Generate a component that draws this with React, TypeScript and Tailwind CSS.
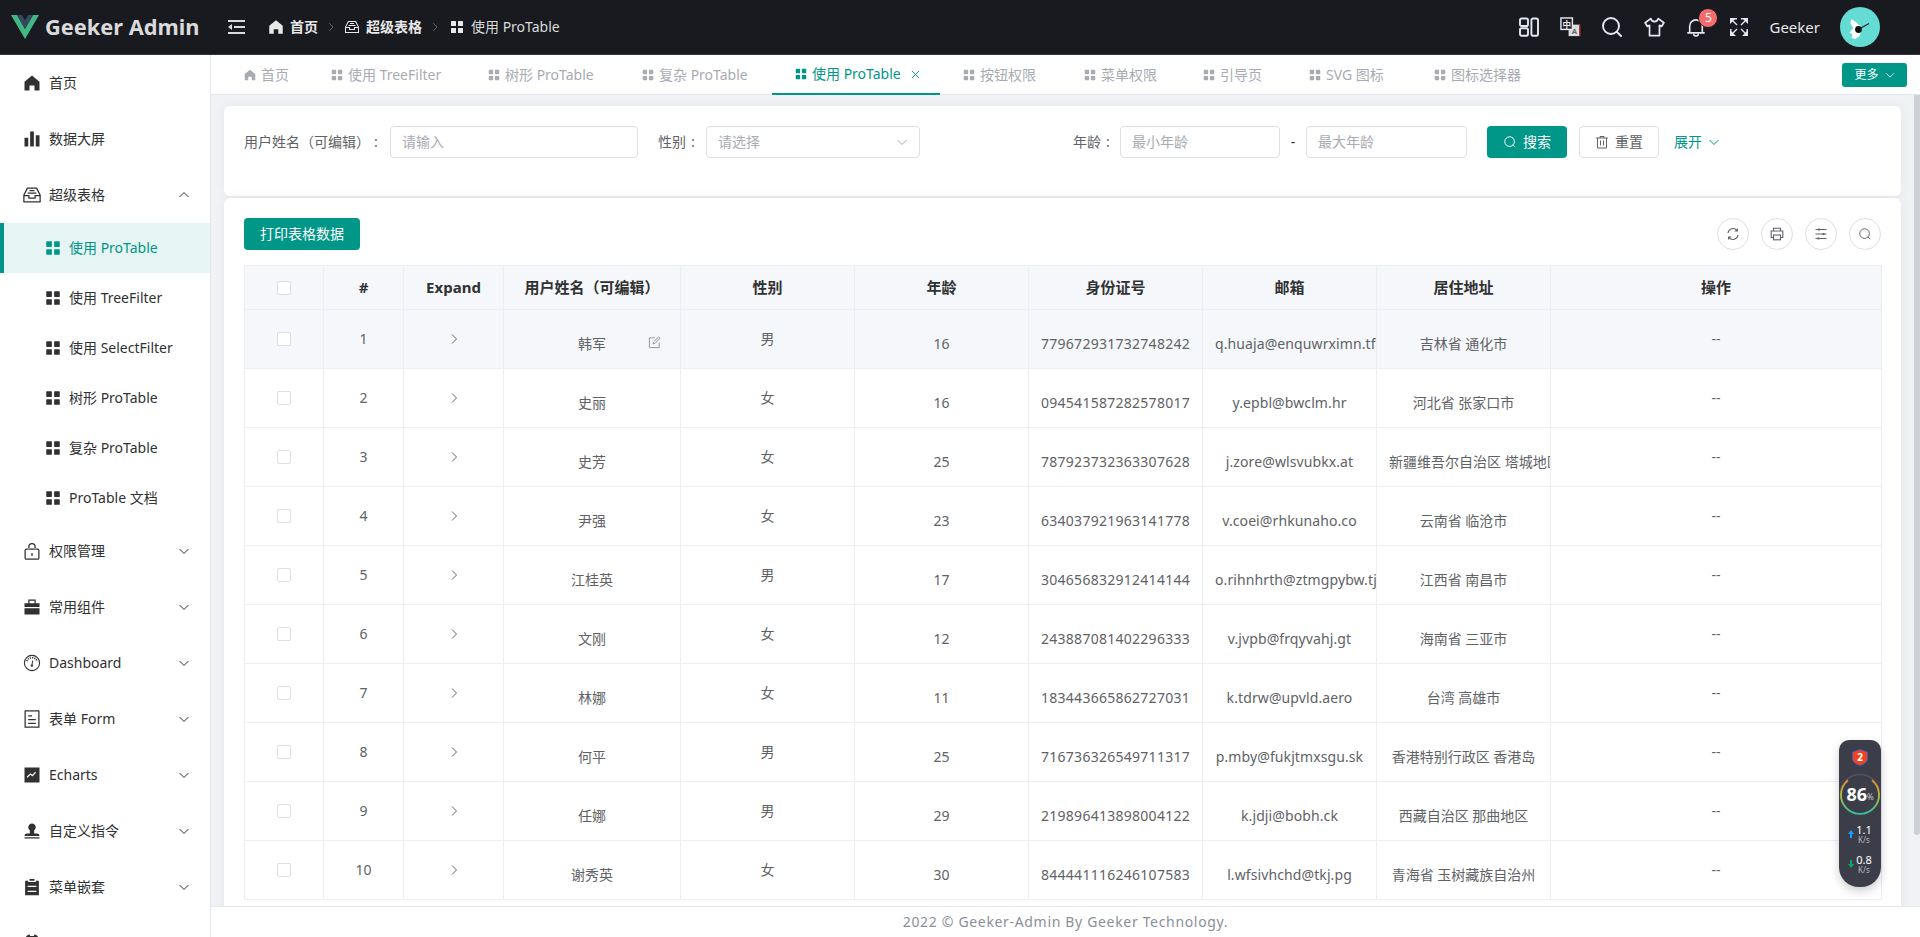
import type { ReactNode } from 'react';

const P = ({ d, className = '' }: { d: string; className?: string }) => (
  <svg viewBox="0 0 1024 1024" fill="currentColor" className={className}>
    <path d={d} fillRule="evenodd" />
  </svg>
);

const HOME = 'M512 128 128 447.936V896h255.936V640H640v256h255.936V447.936z';
const MENU =
  'M160 448a32 32 0 0 1-32-32V160a32 32 0 0 1 32-32h256a32 32 0 0 1 32 32v256a32 32 0 0 1-32 32H160zm448 0a32 32 0 0 1-32-32V160a32 32 0 0 1 32-32h256a32 32 0 0 1 32 32v256a32 32 0 0 1-32 32H608zM160 896a32 32 0 0 1-32-32V608a32 32 0 0 1 32-32h256a32 32 0 0 1 32 32v256a32 32 0 0 1-32 32H160zm448 0a32 32 0 0 1-32-32V608a32 32 0 0 1 32-32h256a32 32 0 0 1 32 32v256a32 32 0 0 1-32 32H608z';
const BOX =
  'M288 384h448v64H288v-64zm96-128h256v64H384v-64zM131.456 512H384v128h256V512h252.544L721.856 192H302.144L131.456 512zM896 576H704v128H320V576H128v256h768V576zM275.776 128h472.448a32 32 0 0 1 28.608 17.664l179.84 359.552A32 32 0 0 1 960 519.552V864a32 32 0 0 1-32 32H96a32 32 0 0 1-32-32V519.552a32 32 0 0 1 3.392-14.336l179.776-359.552A32 32 0 0 1 275.776 128z';
const BARS = 'M416 896V128h192v768H416zm-288 0V448h192v448H128zm576 0V320h192v576H704z';
const LOCK =
  'M224 448a32 32 0 0 0-32 32v384a32 32 0 0 0 32 32h576a32 32 0 0 0 32-32V480a32 32 0 0 0-32-32H224zm0-64h576a96 96 0 0 1 96 96v384a96 96 0 0 1-96 96H224a96 96 0 0 1-96-96V480a96 96 0 0 1 96-96zM480 608h64v160h-64zM512 96a192 192 0 0 1 192 192v128h-64V288a128 128 0 0 0-256 0v128h-64V288A192 192 0 0 1 512 96z';
const CASE = 'M320 320V128h384v192h192v192H128V320h192zM128 576h768v320H128V576zM384 320h256V192H384v128z';
const STAMP =
  'M624 475.968V640h144a128 128 0 0 1 128 128H128a128 128 0 0 1 128-128h144V475.968a192 192 0 1 1 224 0zM128 896v-64h768v64H128z';
const LIST =
  'M704 192h160v736H160V192h160v64h384v-64zM288 512h448v-64H288v64zm0 256h448v-64H288v64zm96-576V96h256v96H384z';
const TICKETS =
  'M192 128v768h640V128H192zm-32-64h704a32 32 0 0 1 32 32v832a32 32 0 0 1-32 32H160a32 32 0 0 1-32-32V96a32 32 0 0 1 32-32zm160 448h384v64H320v-64zm0-192h192v64H320v-64zm0 384h384v64H320v-64z';
const TREND =
  'M128 128h768v768H128V128zm156 524 150-150 104 84 180-190-46-46-140 148-102-82-190 190 44 46z';
const TOOLS =
  'M764.416 254.72a351.68 351.68 0 0 1 86.336 149.184H960v192.064H850.752a351.68 351.68 0 0 1-86.336 149.312l54.72 94.72-166.272 96-54.592-94.72a352.64 352.64 0 0 1-172.48 0L371.136 936l-166.272-96 54.72-94.72a351.68 351.68 0 0 1-86.336-149.312H64v-192h109.248a351.68 351.68 0 0 1 86.336-149.312L204.8 160l166.208-96h.192l54.656 94.592a352.64 352.64 0 0 1 172.48 0L652.8 64h.128L819.2 160l-54.72 94.72z';

const Odometer = ({ className = '' }: { className?: string }) => (
  <svg viewBox="0 0 20 20" fill="none" stroke="currentColor" className={className}>
    <circle cx="10" cy="10" r="7.6" strokeWidth="1.1" />
    <path d="M4.8 8.2A5.6 5.6 0 0 1 15.2 8.2" strokeWidth="1.6" strokeDasharray="1.2 1" />
    <path d="M10.6 7.6 10 12" strokeWidth="1" />
    <circle cx="9.9" cy="12.6" r="1.2" fill="currentColor" strokeWidth="0" />
  </svg>
);

const Chevron = ({ className = '', dir = 'down' }: { className?: string; dir?: 'down' | 'up' | 'right' }) => (
  <svg viewBox="0 0 12 12" fill="none" stroke="currentColor" strokeWidth="1" className={className}>
    {dir === 'down' && <path d="M1.5 4 6 8.5 10.5 4" />}
    {dir === 'up' && <path d="M1.5 8 6 3.5 10.5 8" />}
    {dir === 'right' && <path d="M4 1.5 8.5 6 4 10.5" />}
  </svg>
);

const SearchGlyph = ({ className = '' }: { className?: string }) => (
  <svg viewBox="0 0 16 16" fill="none" stroke="currentColor" strokeWidth="1.1" className={className}>
    <circle cx="7.5" cy="7.5" r="5.5" />
    <path d="m11.6 11.6 2 2" strokeLinecap="round" />
  </svg>
);

const subMenu = ['使用 ProTable', '使用 TreeFilter', '使用 SelectFilter', '树形 ProTable', '复杂 ProTable', 'ProTable 文档'];

const bottomMenu: { label: string; icon: ReactNode }[] = [
  { label: '权限管理', icon: <P d={LOCK} className="w-5 h-5" /> },
  { label: '常用组件', icon: <P d={CASE} className="w-5 h-5" /> },
  { label: 'Dashboard', icon: <Odometer className="w-5 h-5" /> },
  { label: '表单 Form', icon: <P d={TICKETS} className="w-5 h-5" /> },
  { label: 'Echarts', icon: <P d={TREND} className="w-5 h-5" /> },
  { label: '自定义指令', icon: <P d={STAMP} className="w-5 h-5" /> },
  { label: '菜单嵌套', icon: <P d={LIST} className="w-5 h-5" /> },
];

const tabs = [
  { label: '首页', icon: HOME, w: 'w-[87px]' },
  { label: '使用 TreeFilter', w: 'w-[157px]' },
  { label: '树形 ProTable', w: 'w-[154px]' },
  { label: '复杂 ProTable', w: 'w-[153px]' },
  { label: '使用 ProTable', active: true, w: 'w-[168px]' },
  { label: '按钮权限', w: 'w-[121px]' },
  { label: '菜单权限', w: 'w-[119px]' },
  { label: '引导页', w: 'w-[106px]' },
  { label: 'SVG 图标', w: 'w-[125px]' },
  { label: '图标选择器', w: 'w-[110px]' },
];

const rows = [
  ['1', '韩军', '男', '16', '779672931732748242', 'q.huaja@enquwrximn.tf', '吉林省 通化市'],
  ['2', '史丽', '女', '16', '094541587282578017', 'y.epbl@bwclm.hr', '河北省 张家口市'],
  ['3', '史芳', '女', '25', '787923732363307628', 'j.zore@wlsvubkx.at', '新疆维吾尔自治区 塔城地区'],
  ['4', '尹强', '女', '23', '634037921963141778', 'v.coei@rhkunaho.co', '云南省 临沧市'],
  ['5', '江桂英', '男', '17', '304656832912414144', 'o.rihnhrth@ztmgpybw.tj', '江西省 南昌市'],
  ['6', '文刚', '女', '12', '243887081402296333', 'v.jvpb@frqyvahj.gt', '海南省 三亚市'],
  ['7', '林娜', '女', '11', '183443665862727031', 'k.tdrw@upvld.aero', '台湾 高雄市'],
  ['8', '何平', '男', '25', '716736326549711317', 'p.mby@fukjtmxsgu.sk', '香港特别行政区 香港岛'],
  ['9', '任娜', '男', '29', '219896413898004122', 'k.jdji@bobh.ck', '西藏自治区 那曲地区'],
  ['10', '谢秀英', '女', '30', '844441116246107583', 'l.wfsivhchd@tkj.pg', '青海省 玉树藏族自治州'],
];

const Checkbox = () => <span className="block w-[14px] h-[14px] mx-auto rounded-[2px] border border-[#dcdfe6] bg-white" />;

function Header() {
  return (
    <header className="h-[55px] shrink-0 flex items-center bg-[#191a20] border-b border-[#33343a] text-[#e5eaf3]">
      <div className="w-[228px] shrink-0 flex items-center pl-[11px]">
        <svg viewBox="0 0 28 24" className="w-[28px] h-[24px]">
          <path d="M0 0h6l8 14 8-14h6L14 24z" fill="#41b883" />
          <path d="M6 0h5l3 5.5L17 0h5l-8 14z" fill="#35495e" />
        </svg>
        <span className="ml-[6px] text-[21.8px] leading-none font-bold text-[#dadada] whitespace-nowrap">Geeker Admin</span>
      </div>
      <svg viewBox="0 0 17 14" fill="currentColor" className="w-[17px] h-[14px] text-[#dadada]">
        <path d="M0 0h17v2H0zM6 6h11v2H6zM0 12h17v2H0zM4 4v6L0 7z" />
      </svg>
      <nav className="ml-[24px] flex items-center text-sm text-[#dadada] whitespace-nowrap">
        <P d={HOME} className="w-[18px] h-[18px] -mx-[2px] text-[#e8e8e8]" />
        <span className="ml-[7px] font-bold text-[#e8e8e8]">首页</span>
        <Chevron dir="right" className="ml-[8px] mr-[8px] w-[10px] h-[10px] text-[#777]" />
        <P d={BOX} className="w-[16px] h-[16px] text-[#e8e8e8]" />
        <span className="ml-[6px] font-bold text-[#e8e8e8]">超级表格</span>
        <Chevron dir="right" className="ml-[8px] mr-[10px] w-[10px] h-[10px] text-[#777]" />
        <P d={MENU} className="w-[16px] h-[16px] -ml-[1px] text-[#e8e8e8]" />
        <span className="ml-[6px]">使用 ProTable</span>
      </nav>
      <div className="ml-auto flex items-center text-[#e4e8ee]">
        <svg viewBox="0 0 20 20" fill="none" stroke="currentColor" strokeWidth="1.9" className="w-5 h-5">
          <rect x="1" y="1.5" width="8" height="7.5" rx="1.6" />
          <rect x="1" y="11.2" width="8" height="7.5" rx="1.6" />
          <rect x="12.4" y="1.5" width="6.6" height="17.2" rx="1.6" />
        </svg>
        <svg viewBox="0 0 22 22" className="ml-[21px] w-[21px] h-[21px]">
          <rect x="9" y="8" width="12" height="12" fill="#d8dce4" />
          <rect x="20" y="8" width="1.4" height="12" fill="#b3261e" />
          <text x="15" y="18" fontSize="8" textAnchor="middle" fill="#666" fontWeight="700">A</text>
          <rect x="1" y="1" width="12" height="12" fill="#191a20" stroke="#e4e8ee" strokeWidth="1.5" />
          <text x="7" y="11" fontSize="9" textAnchor="middle" fill="#e4e8ee" fontWeight="700">中</text>
        </svg>
        <svg viewBox="0 0 20 20" fill="none" stroke="currentColor" strokeWidth="1.9" className="ml-[21px] w-5 h-5">
          <circle cx="9" cy="9" r="8" />
          <path d="m15 15 4 4" strokeLinecap="round" />
        </svg>
        <svg viewBox="0 0 22 20" fill="none" stroke="currentColor" strokeWidth="1.8" strokeLinejoin="round" className="ml-[22px] w-[21px] h-5">
          <path d="M7 1.2 1.2 5.6 3.6 9.4 5.8 8.2V19h10.4V8.2l2.2 1.2 2.4-3.8L15 1.2c-.6 2.2-2.2 3.2-4 3.2S7.6 3.4 7 1.2z" />
        </svg>
        <div className="relative ml-[22px] w-[18px] h-[21px]">
          <svg viewBox="0 0 20 21" fill="none" stroke="currentColor" strokeWidth="1.8" className="w-[18px] h-[21px]">
            <path d="M1 16.5h18M3 16.5V9a7 7 0 0 1 14 0v7.5M7.5 18.5a3 3 0 0 0 5 0" strokeLinecap="round" />
          </svg>
          <span className="absolute -top-[9px] left-[11px] w-[20px] h-[20px] rounded-full bg-[#f56c6c] border border-[#191a20] text-white text-xs flex items-center justify-center">5</span>
        </div>
        <svg viewBox="0 0 18 18" className="ml-[25px] w-[18px] h-[18px]">
          <path d="M0 0h6L0 6zM18 0v6l-6-6zM0 18v-6l6 6zM18 18h-6l6-6z" fill="currentColor" />
          <path d="m2 2 5 5M16 2l-5 5M2 16l5-5M16 16l-5-5M7 .8H1M17 .8h-6M.8 11v6M17.2 11v6" stroke="currentColor" strokeWidth="1.4" fill="none" />
        </svg>
        <span className="ml-[21px] text-[15px] text-[#e8e8e8]">Geeker</span>
        <svg viewBox="0 0 40 40" className="ml-[20px] mr-[40px] w-10 h-10">
          <circle cx="20" cy="20" r="20" fill="#64dcd4" />
          <path d="M11 12l5 3 3 3 2 1 .5 4-2 6-4 3-4-1 1-4-3-1 2-3 2-2-3-4z" fill="#fff" />
          <circle cx="18.5" cy="22.5" r="3.4" fill="#111" />
          <path d="M20 21.5l9-5" stroke="#222" strokeWidth="1.3" />
        </svg>
      </div>
    </header>
  );
}

function Sidebar() {
  return (
    <aside className="w-[211px] shrink-0 overflow-hidden bg-white border-r border-[#e4e7ed] text-sm text-[#303133]">
      <div className="h-[56px] flex items-center pl-[22px]">
        <P d={HOME} className="w-5 h-5" />
        <span className="ml-[7px]">首页</span>
      </div>
      <div className="h-[56px] flex items-center pl-[22px]">
        <P d={BARS} className="w-5 h-5" />
        <span className="ml-[7px]">数据大屏</span>
      </div>
      <div className="h-[56px] flex items-center pl-[22px]">
        <P d={BOX} className="w-5 h-5" />
        <span className="ml-[7px]">超级表格</span>
        <Chevron dir="up" className="ml-auto mr-[20px] w-3 h-3" />
      </div>
      {subMenu.map((item, i) => (
        <div
          key={item}
          className={
            i === 0
              ? 'h-[50px] flex items-center pl-[40px] bg-[#e6f4f3] text-[#009688] border-l-4 border-[#009688]'
              : 'h-[50px] flex items-center pl-[44px]'
          }
        >
          <P d={MENU} className="w-[18px] h-[18px]" />
          <span className="ml-[7px]">{item}</span>
        </div>
      ))}
      {bottomMenu.map((item) => (
        <div key={item.label} className="h-[56px] flex items-center pl-[22px]">
          {item.icon}
          <span className="ml-[7px]">{item.label}</span>
          <Chevron className="ml-auto mr-[20px] w-3 h-3" />
        </div>
      ))}
      {/* next menu item, only the top of its icon is on screen */}
      <div className="h-[56px] flex items-center pl-[22px]">
        <P d={TOOLS} className="w-5 h-5" />
      </div>
    </aside>
  );
}

function TabBar() {
  return (
    <div className="h-[40px] shrink-0 flex bg-white border-b border-[#e4e7ed] text-sm text-[#a8abb2] whitespace-nowrap">
      <div className="flex flex-1 pl-[10px]">
        {tabs.map((t) => (
          <div
            key={t.label}
            className={
              t.active
                ? `${t.w} h-[40px] flex items-center pl-[22px] border-b-2 border-[#009688] text-[#009688]`
                : `${t.w} h-[39px] flex items-center pl-[22px]`
            }
          >
            <P d={t.icon ?? MENU} className="w-[14px] h-[14px]" />
            <span className="ml-[4px]">{t.label}</span>
            {t.active && (
              <svg viewBox="0 0 10 10" fill="none" stroke="currentColor" strokeWidth="1" className="ml-[10px] w-[9px] h-[9px]">
                <path d="M1 1l8 8M9 1l-8 8" />
              </svg>
            )}
          </div>
        ))}
      </div>
      <div className="w-[78px] pt-[8px]">
        <div className="w-[65px] h-[24px] flex items-center justify-center gap-[6px] rounded-[3px] bg-[#009688] text-white text-xs">
          更多
          <Chevron className="w-[10px] h-[10px]" />
        </div>
      </div>
    </div>
  );
}

const inputBox = 'h-[32px] flex items-center rounded-[4px] border border-[#dcdfe6] bg-white text-[#a8abb2] px-[11px]';

function SearchCard() {
  return (
    <section className="h-[90px] rounded-[6px] bg-white shadow-[0_0_12px_rgba(0,0,0,0.05)] pl-[20px] pt-[20px] flex items-start text-sm text-[#606266] whitespace-nowrap">
      <label className="w-[146px] h-[32px] flex items-center">
        用户姓名（可编辑）<span className="ml-[4px]">:</span>
      </label>
      <div className={`${inputBox} w-[248px]`}>请输入</div>
      <label className="ml-[20px] w-[48px] h-[32px] flex items-center">
        性别<span className="ml-[5px]">:</span>
      </label>
      <div className={`${inputBox} w-[214px] justify-between`}>
        请选择
        <Chevron className="w-3 h-3 text-[#a8abb2]" />
      </div>
      <label className="ml-[153px] w-[47px] h-[32px] flex items-center">
        年龄<span className="ml-[5px]">:</span>
      </label>
      <div className={`${inputBox} w-[160px]`}>最小年龄</div>
      <span className="w-[26px] h-[32px] flex items-center justify-center text-[#303133]">-</span>
      <div className={`${inputBox} w-[161px]`}>最大年龄</div>
      <button className="ml-[20px] w-[80px] h-[32px] flex items-center justify-center gap-[6px] rounded-[4px] bg-[#009688] text-white">
        <SearchGlyph className="w-[14px] h-[14px]" />
        搜索
      </button>
      <button className="ml-[12px] w-[80px] h-[32px] flex items-center justify-center gap-[6px] rounded-[4px] border border-[#dcdfe6] text-[#606266]">
        <svg viewBox="0 0 14 14" fill="none" stroke="currentColor" strokeWidth="1" className="w-[14px] h-[14px]">
          <path d="M1 3h12M5 3V1.5h4V3M2.5 3v10h9V3M5.5 5.5v5M8.5 5.5v5" />
        </svg>
        重置
      </button>
      <span className="ml-[15px] h-[32px] flex items-center gap-[6px] text-[#009688]">
        展开
        <Chevron className="w-3 h-3" />
      </span>
    </section>
  );
}

const ToolButton = ({ children }: { children: ReactNode }) => (
  <button className="w-[32px] h-[32px] flex items-center justify-center rounded-full border border-[#dcdfe6] bg-white text-[#606266]">
    {children}
  </button>
);

function Toolbar() {
  return (
    <div className="h-[32px] mb-[15px] flex items-center justify-between">
      <button className="w-[116px] h-[32px] rounded-[4px] bg-[#009688] text-white text-sm">打印表格数据</button>
      <div className="flex gap-[12px]">
        <ToolButton>
          <svg viewBox="0 0 14 14" fill="none" stroke="currentColor" strokeWidth="1.1" className="w-[14px] h-[14px]">
            <path d="M2 6a5 5 0 0 1 9-2.4M12 8a5 5 0 0 1-9 2.4M11.4 1.4v2.6H8.8M2.6 12.6V10h2.6" />
          </svg>
        </ToolButton>
        <ToolButton>
          <svg viewBox="0 0 14 14" fill="none" stroke="currentColor" strokeWidth="1.1" className="w-[14px] h-[14px]">
            <path d="M3.5 4V1.2h7V4M3.5 10.5H1.2V4h11.6v6.5h-2.3" />
            <rect x="3.5" y="8" width="7" height="4.8" />
          </svg>
        </ToolButton>
        <ToolButton>
          <svg viewBox="0 0 14 14" fill="none" stroke="currentColor" strokeWidth="1.1" className="w-[14px] h-[14px]">
            <path d="M1.5 2.5h11M1.5 7h11M1.5 11.5h11" />
            <path d="M5 1.4v2.2M9.5 5.9v2.2M4.5 10.4v2.2" strokeWidth="1.8" />
          </svg>
        </ToolButton>
        <ToolButton>
          <SearchGlyph className="w-[14px] h-[14px]" />
        </ToolButton>
      </div>
    </div>
  );
}

const th = 'border border-[#ebeef5] h-[44px] px-[12px] text-[15px] font-bold text-[#303133] text-center';
const td = 'border border-[#ebeef5] h-[59px] px-[12px] text-center overflow-hidden whitespace-nowrap';

function DataTable() {
  return (
    <table className="w-[1637px] table-fixed border-collapse text-sm text-[#606266]">
      <colgroup>
        <col className="w-[79px]" />
        <col className="w-[80px]" />
        <col className="w-[100px]" />
        <col className="w-[177px]" />
        <col className="w-[174px]" />
        <col className="w-[174px]" />
        <col className="w-[174px]" />
        <col className="w-[174px]" />
        <col className="w-[174px]" />
        <col className="w-[331px]" />
      </colgroup>
      <thead>
        <tr className="bg-[#f5f7fa]">
          <th className={th}><Checkbox /></th>
          <th className={th}>#</th>
          <th className={th}>Expand</th>
          <th className={`${th} whitespace-nowrap`}>用户姓名（可编辑）</th>
          <th className={th}>性别</th>
          <th className={th}>年龄</th>
          <th className={th}>身份证号</th>
          <th className={th}>邮箱</th>
          <th className={th}>居住地址</th>
          <th className={th}>操作</th>
        </tr>
      </thead>
      <tbody>
        {rows.map((r, i) => (
          <tr key={r[0]} className={i === 0 ? 'bg-[#f5f7fa]' : 'bg-white'}>
            <td className={td}><Checkbox /></td>
            <td className={td}>{r[0]}</td>
            <td className={td}><Chevron dir="right" className="w-[12px] h-[12px] mx-auto" /></td>
            <td className={td}>
              <div className="relative pt-[9px]">
                {r[1]}
                {i === 0 && (
                  <svg viewBox="0 0 14 14" fill="none" stroke="#8a8d93" strokeWidth="1" className="absolute right-[7px] top-[11px] w-[13px] h-[13px]">
                    <path d="M7 2H1.5v10.5H12V7M5.5 8.5l.4-2L11.5 1l1.5 1.5-5.5 5.6z" />
                  </svg>
                )}
              </div>
            </td>
            <td className={td}>{r[2]}</td>
            <td className={td}><div className="pt-[9px]">{r[3]}</div></td>
            <td className={td}><div className="pt-[9px] tracking-[0.27px]">{r[4]}</div></td>
            <td className={td}><div className="pt-[9px] tracking-[0.1px]">{r[5]}</div></td>
            <td className={td}><div className="pt-[9px]">{r[6]}</div></td>
            <td className={td}>--</td>
          </tr>
        ))}
      </tbody>
    </table>
  );
}

function SpeedWidget() {
  return (
    <div className="absolute left-[1839px] top-[740px] w-[42px] h-[147px] flex flex-col items-center rounded-t-[10px] rounded-b-[20px] bg-[#3b3e49] shadow-[0_4px_10px_rgba(0,0,0,0.2)] text-white">
      <svg viewBox="0 0 16 17" className="mt-[9px] w-[16px] h-[17px]">
        <path d="M8 .5 15.5 3v6.5c0 3.4-3.5 5.8-7.5 7-4-1.2-7.5-3.6-7.5-7V3z" fill="#f0431e" stroke="#3a5bc7" strokeWidth="1" />
        <text x="8" y="12" fontSize="10" fontWeight="700" textAnchor="middle" fill="#fff">2</text>
      </svg>
      <div className="relative mt-[7px] w-[42px] h-[42px] flex items-center justify-center">
        <svg viewBox="0 0 42 42" fill="none" className="absolute inset-0 w-[42px] h-[42px]">
          <defs>
            <linearGradient id="ring" x1="0" y1="0" x2="0" y2="1">
              <stop offset="0" stopColor="#e58a2e" />
              <stop offset="0.5" stopColor="#a9c23a" />
              <stop offset="1" stopColor="#2fbfa0" />
            </linearGradient>
          </defs>
          <circle cx="21" cy="21" r="19.5" stroke="#50535e" strokeWidth="1.6" />
          <path d="M9 7.2A19 19 0 1 0 33 7.2" stroke="url(#ring)" strokeWidth="1.8" />
        </svg>
        <span className="relative text-[18px] font-bold leading-none">86</span>
        <span className="relative text-[8px] leading-none text-[#c5c7ce] mt-[5px]">%</span>
      </div>
      <div className="mt-[9px] flex items-center">
        <svg viewBox="0 0 6 8" fill="#1e9cff" className="w-[6px] h-[8px] mr-[2px]"><path d="M3 0 6 4H4v4H2V4H0z" /></svg>
        <div className="flex flex-col items-center leading-none">
          <span className="text-[11px] leading-[11px]">1.1</span>
          <span className="text-[8px] leading-[9px] text-[#b5b7bd]">K/s</span>
        </div>
      </div>
      <div className="mt-[10px] flex items-center">
        <svg viewBox="0 0 6 8" fill="#00b060" className="w-[6px] h-[8px] mr-[2px]"><path d="M3 8 0 4h2V0h2v4h2z" /></svg>
        <div className="flex flex-col items-center leading-none">
          <span className="text-[11px] leading-[11px]">0.8</span>
          <span className="text-[8px] leading-[9px] text-[#b5b7bd]">K/s</span>
        </div>
      </div>
    </div>
  );
}

export default function App() {
  return (
    <div className="relative h-screen w-screen overflow-hidden flex flex-col font-['Noto_Sans','Noto_Sans_CJK_SC',sans-serif] [text-spacing-trim:space-all]">
      <Header />
      <div className="flex flex-1 min-h-0">
        <Sidebar />
        <main className="flex-1 min-w-0 flex flex-col">
          <TabBar />
          <div className="relative flex-1 min-h-0 overflow-hidden bg-[#f0f2f5] pt-[11px] pl-[13px] pr-[19px]">
            <SearchCard />
            <section className="mt-[2px] rounded-[6px] bg-white shadow-[0_0_12px_rgba(0,0,0,0.05)] px-[20px] pt-[20px] pb-[20px]">
              <Toolbar />
              <DataTable />
            </section>
            {/* scrollbar thumb */}
            <div className="absolute right-0 top-0 w-[6px] h-[740px] rounded-b-[3px] bg-[#cdd0d6]" />
          </div>
          <footer className="h-[31px] shrink-0 flex items-center justify-center bg-white border-t border-[#e4e7ed] text-sm tracking-[0.67px] text-[#8a8f99]">
            2022 © Geeker-Admin By Geeker Technology.
          </footer>
        </main>
      </div>
      <SpeedWidget />
    </div>
  );
}
